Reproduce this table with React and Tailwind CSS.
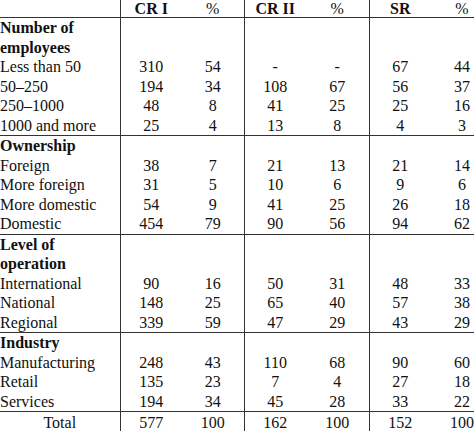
import React from "react";

// Firm sample by survey wave (CR I, CR II, SR)
const sections = [
  {
    title: "Number of employees",
    rows: [
      ["Less than 50", "310", "54", "-", "-", "67", "44"],
      ["50\u2013250", "194", "34", "108", "67", "56", "37"],
      ["250\u20131000", "48", "8", "41", "25", "25", "16"],
      ["1000 and more", "25", "4", "13", "8", "4", "3"],
    ],
  },
  {
    title: "Ownership",
    rows: [
      ["Foreign", "38", "7", "21", "13", "21", "14"],
      ["More foreign", "31", "5", "10", "6", "9", "6"],
      ["More domestic", "54", "9", "41", "25", "26", "18"],
      ["Domestic", "454", "79", "90", "56", "94", "62"],
    ],
  },
  {
    title: "Level of operation",
    rows: [
      ["International", "90", "16", "50", "31", "48", "33"],
      ["National", "148", "25", "65", "40", "57", "38"],
      ["Regional", "339", "59", "47", "29", "43", "29"],
    ],
  },
  {
    title: "Industry",
    rows: [
      ["Manufacturing", "248", "43", "110", "68", "90", "60"],
      ["Retail", "135", "23", "7", "4", "27", "18"],
      ["Services", "194", "34", "45", "28", "33", "22"],
    ],
  },
];

const total = ["Total", "577", "100", "162", "100", "152", "100"];

// right border after label col, CR I % and CR II %
const sep = [true, false, true, false, true, false, false];

function Cell({ i, children, bold, className = "" }) {
  return (
    <td
      className={`p-0 ${i === 0 ? "text-left" : "text-center"} ${
        sep[i] ? "border-r-[1.5px] border-r-[#333]" : ""
      } ${bold ? "font-bold" : ""} ${className}`}
    >
      {children}
    </td>
  );
}

export default function App() {
  return (
    <div
      className="w-[474px] h-[431px] overflow-hidden bg-white text-[#111] text-[16px] leading-[19.5px]"
      style={{ fontFamily: '"Liberation Serif", "Times New Roman", serif' }}
    >
      <table className="table-fixed border-collapse w-[493px]">
        <colgroup>
          <col className="w-[120px]" />
          <col className="w-[62px]" />
          <col className="w-[62px]" />
          <col className="w-[62px]" />
          <col className="w-[63px]" />
          <col className="w-[62px]" />
          <col className="w-[62px]" />
        </colgroup>
        <thead>
          <tr className="h-[17px] leading-[17px] border-b-[1.5px] border-b-[#333]">
            <Cell i={0} />
            <Cell i={1} bold>CR I</Cell>
            <Cell i={2}>%</Cell>
            <Cell i={3} bold>CR II</Cell>
            <Cell i={4}>%</Cell>
            <Cell i={5} bold>SR</Cell>
            <Cell i={6}>%</Cell>
          </tr>
        </thead>
        {sections.map((s) => (
          <tbody key={s.title} className="border-b-[1.5px] border-b-[#333]">
            <tr>
              <Cell i={0} bold>{s.title}</Cell>
              {[1, 2, 3, 4, 5, 6].map((i) => (
                <Cell key={i} i={i} />
              ))}
            </tr>
            {s.rows.map((r) => (
              <tr key={r[0]}>
                {r.map((v, i) => (
                  <Cell key={i} i={i}>{v}</Cell>
                ))}
              </tr>
            ))}
          </tbody>
        ))}
        <tbody>
          <tr className="h-[21px]">
            {total.map((v, i) => (
              <Cell key={i} i={i} className={i === 0 ? "!text-center" : ""}>
                {v}
              </Cell>
            ))}
          </tr>
        </tbody>
      </table>
    </div>
  );
}
